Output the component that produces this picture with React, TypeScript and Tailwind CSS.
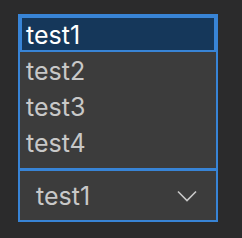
const items = ['test1', 'test2', 'test3', 'test4']

export default function App() {
  const selected = 'test1'

  return (
    <div className="min-h-screen bg-[#2b2b2c] pt-[14px] pl-[18px] font-['Inter',sans-serif]">
      <div className="w-[200px]">
        {/* open listbox */}
        <div className="border-2 border-[#3884d6] bg-[#3c3c3c] pb-[8px]">
          {items.map(it => (
            <div key={it}
              className={`h-[36px] flex items-center text-[25px] leading-none pt-[2px] ${
                it === selected
                  ? 'border-2 border-[#3884d6] bg-[#15375a] text-white pl-[4px]'
                  : 'text-[#c8c8c8] pl-[6px]'
              }`}>
              {it}
            </div>
          ))}
        </div>

        {/* select control */}
        <div className="h-[52px] border-2 border-t border-[#3884d6] bg-[#3c3c3c] flex items-center justify-between pl-[16px] pr-[19px]">
          <span className="text-[25px] leading-none text-[#c8c8c8] pt-[2px]">{selected}</span>
          <svg width="20" height="12" viewBox="0 0 20 12" fill="none">
            <path d="M1 1.5 L10 10.5 L19 1.5" stroke="#c8c8c8" strokeWidth="1.6" />
          </svg>
        </div>
      </div>
    </div>
  )
}
